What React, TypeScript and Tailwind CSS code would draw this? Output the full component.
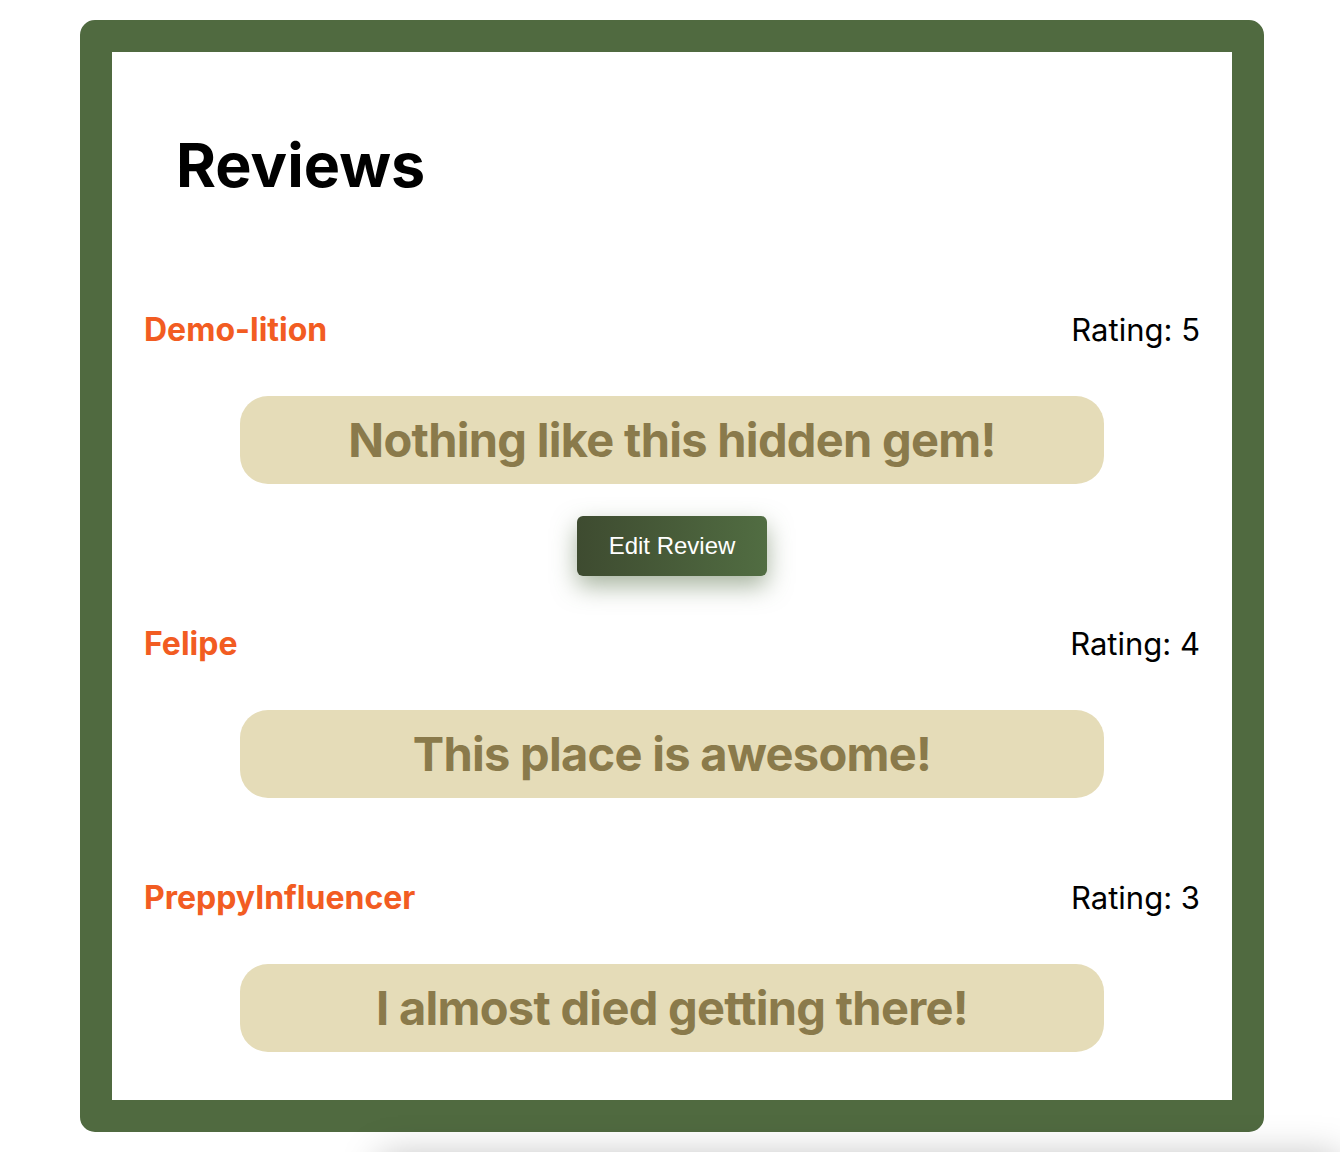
import React from 'react';

type Review = { user: string; rating: number; text: string; mine?: boolean };

const reviews: Review[] = [
  { user: 'Demo-lition', rating: 5, text: 'Nothing like this hidden gem!', mine: true },
  { user: 'Felipe', rating: 4, text: 'This place is awesome!' },
  { user: 'PreppyInfluencer', rating: 3, text: 'I almost died getting there!' },
];

const ReviewItem: React.FC<{ review: Review }> = ({ review }) => (
  <div className="flex flex-col items-center pb-12 last:pb-0">
    <div className="w-full flex justify-between items-baseline leading-[40px] text-[31px]">
      <span className="font-bold text-[32px] text-[#f25c22]">{review.user}</span>
      <span className="text-black">Rating: {review.rating}</span>
    </div>
    <div className="mt-[46px] mb-8 w-[864px] h-[88px] rounded-[28px] bg-[#e5dcb8] flex items-center justify-center">
      <span className="text-[47px] font-bold text-[#8a7a4b] tracking-[-0.7px]">{review.text}</span>
    </div>
    {review.mine && (
      <button className="w-[190px] h-[60px] rounded-md bg-gradient-to-r from-[#3e4b30] to-[#516d42] text-white text-[24px] font-['Liberation_Sans',Arial,sans-serif] shadow-[0_10px_24px_rgba(80,105,63,0.5)]">
        Edit Review
      </button>
    )}
  </div>
);

export default function App() {
  return (
    <div className="min-h-screen bg-white font-['Inter',sans-serif] overflow-hidden pt-[20px]">
      <div className="ml-[80px] w-[1184px] border-[32px] border-[#506a40] rounded-[15px] bg-white px-8 pb-4">
        <h1 className="mt-[83px] pl-8 text-[61px] leading-none font-bold text-black">Reviews</h1>
        <div className="mt-[114px] flex flex-col">
          {reviews.map((r) => (
            <ReviewItem key={r.user} review={r} />
          ))}
        </div>
      </div>
      <div className="mt-[34px] ml-[380px] h-[120px] bg-white shadow-[0_-10px_36px_rgba(0,0,0,0.26)]" />
    </div>
  );
}
